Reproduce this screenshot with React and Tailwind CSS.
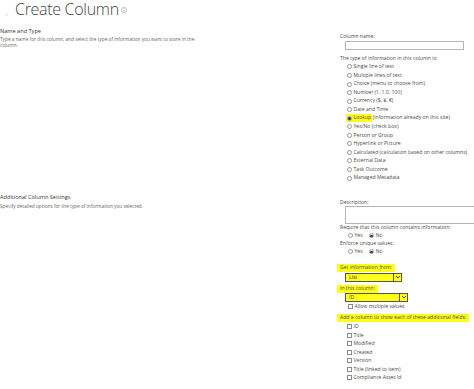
import React from 'react';

const typeOptions = [
  'Single line of text',
  'Multiple lines of text',
  'Choice (menu to choose from)',
  'Number (1, 1.0, 100)',
  'Currency ($, ¥, €)',
  'Date and Time',
  'Lookup',
  'Yes/No (check box)',
  'Person or Group',
  'Hyperlink or Picture',
  'Calculated (calculation based on other columns)',
  'External Data',
  'Task Outcome',
  'Managed Metadata',
];

const extraFields = [
  'ID',
  'Title',
  'Modified',
  'Created',
  'Version',
  'Title (linked to item)',
  'Compliance Asset Id',
];

function Radio({ checked }) {
  return (
    <span className="w-[5px] h-[5px] rounded-full border border-[#9a9a9a] bg-white flex items-center justify-center shrink-0">
      {checked && <span className="w-[2.6px] h-[2.6px] rounded-full bg-[#333]" />}
    </span>
  );
}

function Checkbox() {
  return <span className="w-[5px] h-[5px] border border-[#8a8a8a] bg-white shrink-0" />;
}

function Select({ value, width }) {
  return (
    <div className={`ml-[5px] ${width} h-[9px] flex border border-[#555] bg-[#ffff1a]`}>
      <span className="flex-1 pl-[3px] leading-[7px] text-[5.1px] text-[#333]">{value}</span>
      <span className="w-[8px] border-l border-[#555] flex items-center justify-center">
        <svg viewBox="0 0 10 10" className="w-[6px] h-[6px]">
          <path d="M2 3.5 L5 6.5 L8 3.5" fill="none" stroke="#222" strokeWidth="1.6" />
        </svg>
      </span>
    </div>
  );
}

function Marked({ children, className = '' }) {
  return (
    <div className={`h-[7px] leading-[7px] ${className}`}>
      <span className="inline-block h-[7.5px] -ml-[3px] pl-[3px] pr-[3px] bg-[#ffff1a] rounded-[1px] whitespace-nowrap">
        {children}
      </span>
    </div>
  );
}

export default function App() {
  return (
    <div className="w-[474px] h-screen overflow-hidden bg-white text-[#4a4a4a] font-['Open_Sans',sans-serif]">
      <div className="h-[16px] pt-[1px] flex items-center">
        <span className="w-[15px] pl-[6px] text-[5px] leading-[14px] text-[#999] pt-[10px]">›</span>
        <h1 className="text-[16px] leading-[14px] font-light tracking-[-0.3px] text-[#444]">Create Column</h1>
        <svg viewBox="0 0 10 10" className="ml-[2px] w-[6px] h-[6px] mt-[3px]">
          <circle cx="5" cy="5" r="4.2" fill="none" stroke="#888" strokeWidth="0.9" />
          <path d="M5 4.3 V7.4" stroke="#888" strokeWidth="1" />
          <circle cx="5" cy="2.9" r="0.6" fill="#888" />
        </svg>
      </div>

      <div className="mt-[8px] grid grid-cols-[340px_1fr]">
        <div>
          <h2 className="h-[14px] leading-[14px] text-[5.6px] text-[#333]">Name and Type</h2>
          <p className="-mt-[2px] text-[4.75px] leading-[6px] text-[#666]">
            <span className="block whitespace-nowrap">Type a name for this column, and select the type of information you want to store in the</span>
            <span className="block whitespace-nowrap">column.</span>
          </p>
        </div>
        <div className="text-[5.1px]">
          <div className="mt-[8px] h-[8px] leading-[8px]">Column name:</div>
          <div className="mt-[1px] ml-[5px] w-[119px] h-[9px] border border-[#b5b5b5] bg-white" />
          <div className="mt-[4px] h-[8px] leading-[8px] whitespace-nowrap">The type of information in this column is:</div>
          <div className="mt-[0.7px]">
            {typeOptions.map((opt) => (
              <div key={opt} className="h-[8.55px] pl-[7px] flex items-center gap-[1.5px] whitespace-nowrap">
                {opt === 'Lookup' ? (
                  <span className="flex items-center gap-[1.5px] bg-[#ffff1a] rounded-[1px] -ml-[1.5px] pl-[1.5px] pr-[1px] h-[7.5px]">
                    <Radio checked />
                    <span>Lookup</span>
                  </span>
                ) : (
                  <Radio />
                )}
                {opt === 'Lookup' ? <span className="-ml-[1px]">(information already on this site)</span> : <span>{opt}</span>}
              </div>
            ))}
          </div>
        </div>

        <div>
          <h2 className="mt-[10.6px] h-[8px] leading-[8px] text-[5.6px] text-[#333] whitespace-nowrap">Additional Column Settings</h2>
          <p className="mt-[2.5px] h-[7px] leading-[7px] text-[4.75px] text-[#666] whitespace-nowrap">
            Specify detailed options for the type of information you selected.
          </p>
        </div>
        <div className="text-[5.1px]">
          <div className="mt-[15.6px] h-[8px] leading-[8px]">Description:</div>
          <div className="ml-[5px] w-[140px] h-[18px] border border-[#b5b5b5] bg-white" />
          <div className="h-[7px] leading-[7px] whitespace-nowrap">Require that this column contains information:</div>
          <div className="mt-[1.5px] h-[7px] pl-[8px] flex items-center gap-[1.5px]">
            <Radio />
            <span>Yes</span>
            <span className="ml-[5px]"><Radio checked /></span>
            <span>No</span>
          </div>
          <div className="mt-[1px] h-[7px] leading-[7px]">Enforce unique values:</div>
          <div className="mt-[1px] h-[7px] pl-[8px] flex items-center gap-[1.5px]">
            <Radio />
            <span>Yes</span>
            <span className="ml-[5px]"><Radio checked /></span>
            <span>No</span>
          </div>

          <Marked className="mt-[9px]">Get information from:</Marked>
          <div className="mt-[1.5px]">
            <Select value="List" width="w-[57px]" />
          </div>
          <Marked className="mt-[3.5px]">In this column:</Marked>
          <div className="mt-[0.5px]">
            <Select value="ID" width="w-[63px]" />
          </div>
          <div className="mt-[1.5px] h-[7px] pl-[8px] flex items-center gap-[1.5px]">
            <Checkbox />
            <span>Allow multiple values</span>
          </div>
          <Marked className="mt-[4px]">Add a column to show each of these additional fields:</Marked>
          <div className="mt-[1.25px]">
            {extraFields.map((f) => (
              <div key={f} className="h-[8.5px] pl-[7px] flex items-center gap-[1.5px] whitespace-nowrap">
                <Checkbox />
                <span>{f}</span>
              </div>
            ))}
          </div>
        </div>
      </div>
    </div>
  );
}
